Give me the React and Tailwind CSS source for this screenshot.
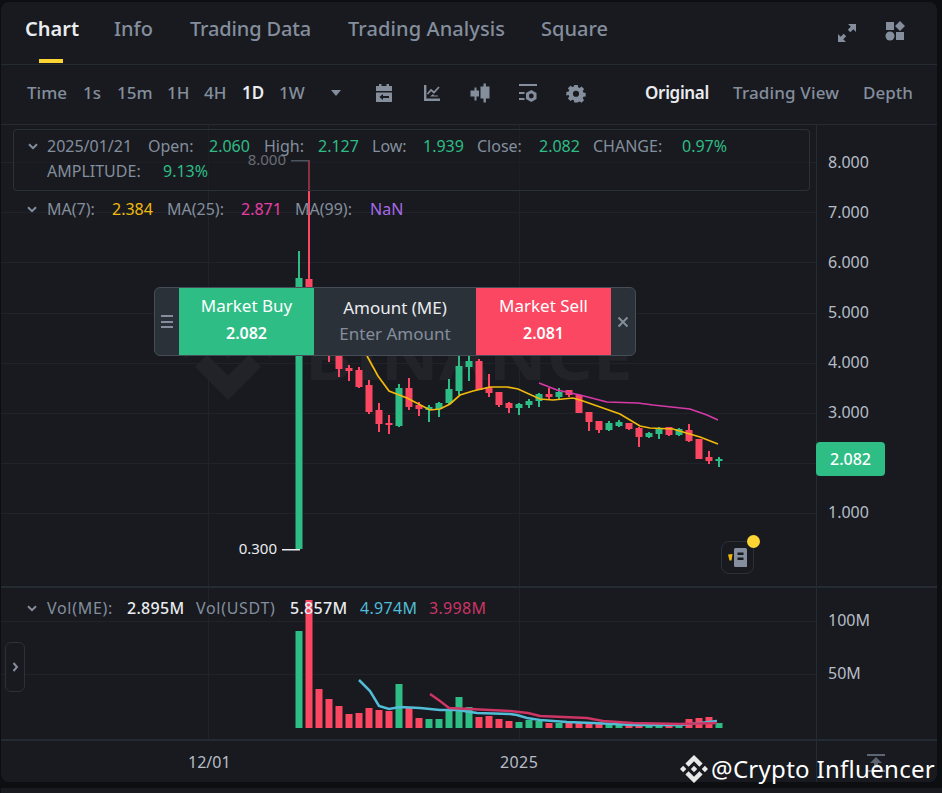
import React from 'react';

const GREEN = '#2ebd85';
const RED = '#fb4762';

// x, up, high, top, bottom, low (screen pixels)
const candles = [
  [299, 1, 251, 278, 549, 549],
  [309, 0, 160, 279, 340, 345],
  [319, 0, 300, 310, 350, 352],
  [329, 0, 320, 335, 356, 362],
  [339, 0, 340, 350, 369, 377],
  [349, 0, 365, 368, 371, 381],
  [359, 0, 367, 370, 387, 388],
  [369, 0, 380, 385, 412, 414],
  [379, 0, 403, 410, 424, 432],
  [389, 0, 415, 423, 425, 434],
  [399, 1, 384, 388, 426, 427],
  [409, 0, 378, 388, 407, 410],
  [419, 0, 402, 405, 409, 416],
  [429, 1, 405, 407, 410, 422],
  [439, 1, 402, 403, 409, 417],
  [449, 1, 379, 389, 403, 405],
  [459, 1, 355, 366, 391, 395],
  [469, 1, 350, 361, 367, 381],
  [479, 0, 359, 361, 390, 390],
  [489, 0, 374, 387, 393, 397],
  [499, 0, 392, 392, 405, 407],
  [509, 0, 402, 403, 408, 413],
  [519, 1, 403, 404, 408, 415],
  [529, 1, 399, 401, 405, 408],
  [539, 1, 393, 394, 401, 407],
  [549, 0, 388, 394, 397, 399],
  [559, 1, 388, 392, 397, 399],
  [569, 0, 390, 390, 395, 397],
  [579, 0, 394, 395, 413, 413],
  [589, 0, 412, 412, 422, 431],
  [599, 0, 421, 421, 430, 433],
  [609, 1, 421, 423, 430, 431],
  [619, 1, 420, 422, 426, 427],
  [629, 0, 423, 423, 429, 430],
  [639, 0, 427, 428, 437, 447],
  [649, 1, 432, 433, 437, 438],
  [659, 1, 427, 428, 434, 439],
  [669, 0, 427, 427, 435, 436],
  [679, 1, 428, 429, 435, 436],
  [689, 0, 424, 430, 441, 442],
  [699, 0, 439, 439, 459, 459],
  [709, 0, 451, 457, 461, 464],
  [719, 1, 457, 459, 461, 467],
];

// x, up, top
const volumes = [
  [299, 1, 631], [309, 0, 600], [319, 0, 689], [329, 0, 699], [339, 0, 706], [349, 0, 714],
  [359, 0, 713], [369, 0, 708], [379, 0, 710], [389, 0, 711], [399, 1, 684], [409, 0, 708],
  [419, 0, 718], [429, 1, 719], [439, 1, 719], [449, 1, 710], [459, 1, 697], [469, 1, 707],
  [479, 0, 717], [489, 0, 716], [499, 0, 719], [509, 0, 721], [519, 1, 722], [529, 1, 720],
  [539, 1, 721], [549, 0, 723], [559, 1, 723], [569, 0, 723], [579, 0, 723], [589, 0, 723],
  [599, 0, 724], [609, 1, 724], [619, 1, 724], [629, 0, 725], [639, 0, 725], [649, 1, 725],
  [659, 1, 725], [669, 0, 725], [679, 1, 725], [689, 0, 719], [699, 0, 718], [709, 0, 717],
  [719, 1, 723],
];

const ma7 = '367,356 378,376 389,391 407,398 430,410 440,409 450,404 460,395 473,391 490,387 507,387 518,389 540,399 553,400 573,398 583,401 620,414 640,426 650,428 673,429 683,432 700,437 718,444';
const ma25 = '539,383 557,390 580,395 607,402 638,403 653,405 690,409 707,415 718,420';
const volBlue = '359,680 370,691 379,706 389,709 400,707 420,708 440,710 457,710 477,713 510,714 517,715 527,718 540,720 567,722 593,723 633,725 680,725 700,723 717,721';
const volPink = '430,694 440,701 449,708 470,709 510,711 528,713 540,716 587,718 603,721 633,723 680,724 717,723';

const LOGO = 'M38.73 53.2l24.59-24.58 24.6 24.6 14.3-14.31L63.32 0 24.43 38.9 38.73 53.2z M0 63.31l14.3-14.31 14.31 14.31-14.31 14.3L0 63.31z M38.73 73.41l24.59 24.59 24.6-24.6 14.31 14.29-38.9 38.91-38.91-38.88-.02-.02 14.33-14.29z M98.28 63.31l14.3-14.31 14.31 14.3-14.31 14.31-14.3-14.3z M77.83 63.3L63.32 48.78 52.59 59.51l-1.24 1.23-2.54 2.54 14.51 14.53 14.51-14.51z';

const Chevron = () => (
  <svg width="10" height="7" viewBox="0 0 10 7" className="shrink-0">
    <path d="M1 1.2l4 4 4-4" fill="none" stroke="#848e9c" strokeWidth="2" />
  </svg>
);

const Label = ({ children, className = '' }) => <span className={`text-[#848e9c] ${className}`}>{children}</span>;

const IconBtn = ({ children }) => (
  <svg width="20" height="20" viewBox="0 0 20 20" fill="#848e9c" className="shrink-0">{children}</svg>
);

const CalendarIcon = () => (
  <IconBtn>
    <path fillRule="evenodd" d="M5 1h2.5v2h5V1H15v2h3v5H2V3h3z M2 9.5h16V19H2z M9 11l-3.6 3L9 17v-2h6v-2H9z" />
  </IconBtn>
);

const IndicatorIcon = () => (
  <IconBtn>
    <path d="M2 2h2.4v13.6H18V18H2z" />
    <path d="M5.5 11l3.5-4 3 2.5L17 4" fill="none" stroke="#848e9c" strokeWidth="1.8" />
    <path d="M8 13.5l3-2.5 1 1.5h4v1H9z" />
  </IconBtn>
);

const CandleIcon = () => (
  <IconBtn>
    <path d="M4 5h2v3h2.5v6H6v4H4v-4H0V8h4z" transform="translate(0.5 -0.5)" />
    <path d="M13 0h2.4v3H19v12h-3.6v4H13v-4H10V3h3z" transform="translate(0.5 0.5)" />
  </IconBtn>
);

const ListSettingIcon = () => (
  <IconBtn>
    <path d="M1 1h18v2H1z M1 9h5.5v2H1z M1 15h5.5v2H1z" />
    <path fillRule="evenodd" d="M13.3 7l5.2 3v6l-5.2 3-5.3-3v-6z M13.3 10.6a2.4 2.4 0 100 4.8 2.4 2.4 0 000-4.8z" />
  </IconBtn>
);

const GearIcon = () => (
  <IconBtn>
    <path fillRule="evenodd" d="M8 1h4l.5 2.6 1.6.7 2.2-1.5 2.9 2.9-1.5 2.2.7 1.6 2.6.5v4l-2.6.5-.7 1.6 1.5 2.2-2.9 2.9-2.2-1.5-1.6.7L12 21H8l-.5-2.6-1.6-.7-2.2 1.5-2.9-2.9 1.5-2.2-.7-1.6L-1 13V9l2.6-.5.7-1.6-1.5-2.2 2.9-2.9 2.2 1.5 1.6-.7z M10 7.5a3.5 3.5 0 100 7 3.5 3.5 0 000-7z" transform="translate(1.2 1.1) scale(.88)" />
  </IconBtn>
);

const Tabs = () => (
  <div className="flex h-[63px] shrink-0 items-center border-b border-[#252b32] pb-[8px] relative">
    <div className="flex items-center pl-[24px] text-[20px] font-medium text-[#848e9c]">
      <span className="relative w-[89px] font-semibold text-[#eaecef]">
        Chart
        <span className="absolute left-[14px] top-[45px] h-[4px] w-[24px] bg-[#fcd535]" />
      </span>
      <span className="w-[76px]">Info</span>
      <span className="w-[158px] tracking-[-0.15px]">Trading Data</span>
      <span className="w-[193px] tracking-[0.1px]">Trading Analysis</span>
      <span>Square</span>
    </div>
    <div className="ml-auto mr-[32px] mt-[4px] flex items-center gap-[29px]">
      <svg width="18" height="18" viewBox="0 0 18 18" fill="#848e9c" className="mt-[4px]">
        <path d="M10 0h8v8l-2.7-2.7-3 3-2.5-2.5 3-3z M8 18H0v-8l2.7 2.7 3-3 2.5 2.5-3 3z" />
      </svg>
      <svg width="20" height="20" viewBox="0 0 20 20" fill="#848e9c">
        <path d="M1 1h8v8H1z M15 0l5 5-5 5-5-5z M11 11h8v8h-8z" />
        <circle cx="5" cy="15" r="4.5" />
      </svg>
    </div>
  </div>
);

const Toolbar = () => (
  <div className="flex h-[60px] shrink-0 items-center border-b border-[#252b32] pb-[4px] text-[17px] font-medium text-[#848e9c]">
    <div className="flex items-center pl-[26px]">
      <span className="w-[56px]">Time</span>
      <span className="w-[34px]">1s</span>
      <span className="w-[50px]">15m</span>
      <span className="w-[37px]">1H</span>
      <span className="w-[38px]">4H</span>
      <span className="w-[37px] font-semibold text-[#eaecef]">1D</span>
      <span className="w-[52px]">1W</span>
    </div>
    <svg width="10" height="6" viewBox="0 0 10 6" fill="#848e9c" className="mr-[33px]">
      <path d="M0 0h10L5 6z" />
    </svg>
    <div className="flex items-center gap-[28px]">
      <CalendarIcon />
      <IndicatorIcon />
      <CandleIcon />
      <ListSettingIcon />
      <GearIcon />
    </div>
    <div className="ml-auto mr-[24px] flex items-center">
      <span className="w-[88px] font-semibold tracking-[-0.35px] text-[#eaecef]">Original</span>
      <span className="w-[130px] tracking-[0.15px]">Trading View</span>
      <span>Depth</span>
    </div>
  </div>
);

const PriceChart = () => (
  <svg viewBox="1 125 815 461" width="815" height="461" className="absolute left-0 top-0">
    {[162, 212, 262, 313, 363, 413, 463, 513].map((y) => (
      <rect key={y} x="1" y={y} width="815" height="1" fill="#212329" />
    ))}
    <rect x="208" y="125" width="1" height="461" fill="#212329" />
    <rect x="519" y="125" width="1" height="461" fill="#212329" />
    <path d={LOGO} transform="translate(174 292) scale(.853)" fill="#212329" />
    <text x="305" y="380" fontSize="62" fontWeight="700" textLength="328" lengthAdjust="spacingAndGlyphs" fill="#212329">BINANCE</text>
    {candles.map(([x, up, high, top, bottom, low]) => (
      <g key={x} fill={up ? GREEN : RED}>
        <rect x={x - 1} y={high} width="2" height={low - high} />
        <rect x={x - 3.5} y={top} width="7" height={Math.max(bottom - top, 2)} />
      </g>
    ))}
    <polyline points={ma7} fill="none" stroke="#f0b90b" strokeWidth="1.7" />
    <polyline points={ma25} fill="none" stroke="#d63aa6" strokeWidth="1.7" />
    <text x="286" y="165" fontSize="15" textAnchor="end" fill="#b7bdc6">8.000</text>
    <rect x="291" y="160" width="18" height="1.5" fill="#848e9c" />
    <text x="277" y="554" fontSize="15" textAnchor="end" fill="#eaecef">0.300</text>
    <rect x="282" y="549" width="18" height="1.5" fill="#eaecef" />
  </svg>
);

const VolumeChart = () => (
  <svg viewBox="1 588 815 151" width="815" height="151" className="absolute left-0 top-0">
    {[621, 674].map((y) => (
      <rect key={y} x="1" y={y} width="815" height="1" fill="#212329" />
    ))}
    <rect x="208" y="588" width="1" height="151" fill="#212329" />
    <rect x="519" y="588" width="1" height="151" fill="#212329" />
    {volumes.map(([x, up, top]) => (
      <rect key={x} x={x - 3.5} y={top} width="7" height={728 - top} fill={up ? GREEN : RED} />
    ))}
    <polyline points={volBlue} fill="none" stroke="#52bdd6" strokeWidth="2.5" />
    <polyline points={volPink} fill="none" stroke="#cc3564" strokeWidth="2.5" />
  </svg>
);

const TradeWidget = () => (
  <div className="absolute left-[153px] top-[162px] flex h-[69px] w-[482px] overflow-hidden rounded-[6px] border border-[#474d57] bg-[#2b3139]">
    <div className="flex w-[24px] flex-col items-center justify-center gap-[3.5px]">
      <span className="h-[2px] w-[12px] bg-[#848e9c]" />
      <span className="h-[2px] w-[12px] bg-[#848e9c]" />
      <span className="h-[2px] w-[12px] bg-[#848e9c]" />
    </div>
    <div className="flex w-[135px] flex-col items-center bg-[#2ebd85] pt-[5px] text-white">
      <span className="text-[17px] leading-[26px]">Market Buy</span>
      <span className="mt-px text-[16px] font-semibold leading-[26px]">2.082</span>
    </div>
    <div className="flex w-[162px] flex-col items-center pt-[7px]">
      <span className="text-[17px] leading-[26px] text-[#eaecef]">Amount (ME)</span>
      <span className="text-[17px] leading-[26px] text-[#848e9c]">Enter Amount</span>
    </div>
    <div className="flex w-[135px] flex-col items-center bg-[#fb4762] pt-[5px] text-white">
      <span className="text-[17px] leading-[26px]">Market Sell</span>
      <span className="mt-px text-[16px] font-semibold leading-[26px]">2.081</span>
    </div>
    <div className="flex flex-1 items-center justify-center">
      <svg width="12" height="12" viewBox="0 0 12 12">
        <path d="M1.5 1.5l9 9M10.5 1.5l-9 9" stroke="#848e9c" strokeWidth="2" />
      </svg>
    </div>
  </div>
);

const NewsButton = () => (
  <div className="absolute left-[720px] top-[416px] flex h-[33px] w-[33px] items-center justify-center rounded-[8px] border border-[#2b3139]">
    <svg width="20" height="19" viewBox="0 0 20 19">
      <path d="M0 6.500l4.500-.5-1 6.500H1.500z" fill="#f0b90b" />
      <path fillRule="evenodd" d="M6 1.500A1.500 1.500 0 017.500 0h10A1.500 1.500 0 0119 1.500V19H7.500A1.500 1.500 0 016 17.500z M9.500 4.500v2.500h6V4.500z M9.500 9.500V12h6V9.500z" fill="#848e9c" />
    </svg>
    <span className="absolute -right-[7px] -top-[7px] h-[13px] w-[13px] rounded-full bg-[#fcd535]" />
  </div>
);

const App = () => (
  <div className="relative h-[793px] w-[942px] overflow-hidden bg-[#0c0e12] pl-px pt-[2px] font-['Noto_Sans','Liberation_Sans',sans-serif]">
    <div className="flex h-[780px] w-[936px] flex-col rounded-[8px] bg-[#181a20]">
      <Tabs />
      <Toolbar />

      {/* price pane */}
      <div className="flex h-[463px] shrink-0 border-b-2 border-[#252b32]">
        <div className="relative w-[815px] overflow-hidden">
          <PriceChart />
          <div className="absolute left-[12px] top-[4px] h-[62px] w-[797px] rounded-[4px] border border-[#2b3139] bg-[#181a20]/50 pl-[14px] pr-[8px] pt-[4px] text-[16px] leading-[25px]">
            <div className="flex items-center">
              <Chevron />
              <Label className="ml-[9px] w-[101px]">2025/01/21</Label>
              <Label className="w-[61px]">Open:</Label>
              <span className="w-[55px] text-[#2ebd85]">2.060</span>
              <Label className="w-[54px]">High:</Label>
              <span className="w-[54px] text-[#2ebd85]">2.127</span>
              <Label className="w-[51px]">Low:</Label>
              <span className="w-[54px] text-[#2ebd85]">1.939</span>
              <Label className="w-[62px]">Close:</Label>
              <span className="w-[54px] text-[#2ebd85]">2.082</span>
              <Label className="w-[89px]">CHANGE:</Label>
              <span className="text-[#2ebd85]">0.97%</span>
            </div>
            <div className="flex pl-[19px]">
              <Label className="w-[116px]">AMPLITUDE:</Label>
              <span className="text-[#2ebd85]">9.13%</span>
            </div>
          </div>
          <div className="absolute left-[26px] top-[72px] flex items-center text-[16px] leading-[25px]">
            <Chevron />
            <Label className="ml-[10px] w-[65px]">MA(7):</Label>
            <span className="w-[55px] text-[#f0b90b]">2.384</span>
            <Label className="w-[74px]">MA(25):</Label>
            <span className="w-[54px] text-[#e93ea6]">2.871</span>
            <Label className="w-[75px]">MA(99):</Label>
            <span className="text-[#a76be8]">NaN</span>
          </div>
          <TradeWidget />
          <NewsButton />
        </div>
        <div className="relative flex-1 border-l border-[#252b32] pl-[11px] pt-[12px] text-[16px] text-[#b7bdc6]">
          {['8.000', '7.000', '6.000', '5.000', '4.000', '3.000', '', '1.000'].map((v, i) => (
            <div key={i} className="flex h-[50px] items-center">{v}</div>
          ))}
          <span className="absolute -left-px top-[317px] flex h-[34px] w-[69px] items-center justify-center rounded-[4px] bg-[#2ebd85] font-medium text-white">2.082</span>
        </div>
      </div>

      {/* volume pane */}
      <div className="flex h-[153px] shrink-0 border-b-2 border-[#252b32]">
        <div className="relative w-[815px] overflow-hidden">
          <VolumeChart />
          <div className="absolute left-[26px] top-[8px] flex items-center text-[16px] leading-[25px]">
            <Chevron />
            <Label className="ml-[10px] w-[80px] tracking-[0.7px]">Vol(ME):</Label>
            <span className="w-[69px] font-medium tracking-[0.3px] text-[#eaecef]">2.895M</span>
            <Label className="w-[94px] tracking-[0.7px]">Vol(USDT)</Label>
            <span className="w-[70px] font-medium tracking-[0.3px] text-[#eaecef]">5.857M</span>
            <span className="w-[69px] tracking-[0.3px] text-[#52bdd6]">4.974M</span>
            <span className="tracking-[0.3px] text-[#cc3564]">3.998M</span>
          </div>
          <div className="absolute left-[4px] top-[54px] flex h-[50px] w-[20px] items-center justify-center rounded-[6px] border border-[#2b3139] bg-[#181a20]">
            <svg width="7" height="10" viewBox="0 0 7 10">
              <path d="M1.500 1l3.500 4-3.500 4" fill="none" stroke="#848e9c" strokeWidth="2" />
            </svg>
          </div>
        </div>
        <div className="flex-1 border-l border-[#252b32] pl-[11px] pt-[18px] text-[16px] text-[#b7bdc6]">
          <div className="flex h-[27px] items-center">100M</div>
          <div className="mt-[26px] flex h-[27px] items-center">50M</div>
        </div>
      </div>

      {/* time axis */}
      <div className="flex min-h-0 flex-1">
        <div className="flex w-[815px] items-center pl-[187px] text-[16px] text-[#b7bdc6]">
          <span className="w-[312px]">12/01</span>
          <span className="tracking-[0.4px]">2025</span>
        </div>
        <div className="flex-1 border-l border-[#252b32] pl-[50px] pt-[13px]">
          <svg width="18" height="18" viewBox="0 0 18 18" fill="#5e6673">
            <path d="M0 0h18v2H0z M9 3l6 6h-4v3H7V9H3z M7 13h4v1H7z M0 16h18v2H0z" />
          </svg>
        </div>
      </div>
    </div>
    <div className="mt-[6px] h-[5px] bg-[#181a20]" />

    {/* repost watermark */}
    <div className="absolute left-[680px] top-[755px] flex h-[28px] items-center gap-[3px] text-[24px] tracking-[0.3px] text-white">
      <svg width="28" height="28" viewBox="0 0 126.6 126.6" fill="#e8e8e8">
        <path d={LOGO} />
      </svg>
      <span className="whitespace-nowrap">@Crypto Influencer</span>
    </div>
  </div>
);

export default App;
